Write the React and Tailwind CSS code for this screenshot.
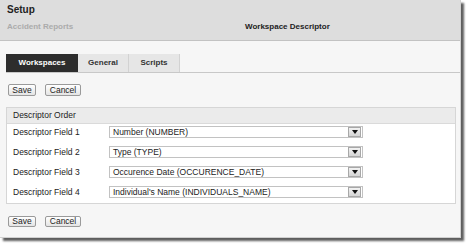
import React from "react";

function Arrow() {
  return (
    <div className="w-[13px] h-[10px] mr-[1px] border border-[#a8a8a8] bg-gradient-to-b from-[#f2f2f2] to-[#d4d4d4] flex items-center justify-center">
      <svg width="6" height="4" viewBox="0 0 6 4"><path d="M0 0H6L3 4Z" fill="#111" /></svg>
    </div>
  );
}

function Field({ label, value }) {
  return (
    <div className="flex items-center h-[12px]">
      <div className="w-[102px] pl-[6px] text-[8.5px] text-[#222] leading-none">{label}</div>
      <div className="flex items-center w-[254px] h-[12px] border border-[#c2c2c2] bg-white">
        <div className="flex-1 pl-[3px] text-[8.5px] text-[#222] leading-none">{value}</div>
        <Arrow />
      </div>
    </div>
  );
}

function Buttons({ h }) {
  const cls =
    "px-[4px] border border-[#9a9a9a] bg-gradient-to-b from-white to-[#e4e4e4] text-[8.5px] leading-none text-[#222] rounded-[2px] flex items-center justify-center";
  return (
    <div className="flex gap-[9px]">
      <button className={cls + " w-[28px] " + h}>Save</button>
      <button className={cls + " w-[36px] " + h}>Cancel</button>
    </div>
  );
}

export default function App() {
  return (
    <div className="w-[474px] h-[249px] bg-white" style={{ fontFamily: "Arial, 'Liberation Sans', sans-serif" }}>
      <div className="w-[461px] h-[238px] bg-[#f6f6f6] border-r border-b border-[#d0d0d0] shadow-[3px_3px_2px_#5e5e5e] flex flex-col">
        <div className="h-[41px] shrink-0 bg-[#dddddd] border-b border-[#c2c2c2] flex flex-col pl-[7px] pt-[4px]">
          <div className="text-[10px] font-bold text-[#222] leading-[12px]">Setup</div>
          <div className="flex items-center mt-[6px] leading-[10px]">
            <div className="w-[238px] text-[8px] font-bold text-[#ababab]">Accident Reports</div>
            <div className="text-[8px] font-bold text-[#222]">Workspace Descriptor</div>
          </div>
        </div>
        <div className="mt-[13px] ml-[6px] flex border-b border-[#c8c8c8] h-[19px] shrink-0">
          <div className="w-[72px] bg-[#2d2d2d] text-white text-[8px] font-bold flex items-center justify-center">Workspaces</div>
          <div className="w-[51px] bg-[#e6e6e6] border-r border-[#d2d2d2] text-[#333] text-[8px] font-bold flex items-center justify-center">General</div>
          <div className="w-[51px] bg-[#e6e6e6] border-r border-[#d2d2d2] text-[#333] text-[8px] font-bold flex items-center justify-center">Scripts</div>
        </div>
        <div className="ml-[8px] mt-[11px]"><Buttons h="h-[12px]" /></div>
        <div className="ml-[6px] mt-[11px] w-[450px] h-[97px] shrink-0 border border-[#d6d6d6] bg-white flex flex-col">
          <div className="h-[16px] shrink-0 bg-[#ebebeb] border-b border-[#dadada] flex items-center pl-[6px] text-[8.5px] text-[#222]">Descriptor Order</div>
          <div className="pt-[2px] flex flex-col gap-[8px]">
            <Field label="Descriptor Field 1" value="Number (NUMBER)" />
            <Field label="Descriptor Field 2" value="Type (TYPE)" />
            <Field label="Descriptor Field 3" value="Occurence Date (OCCURENCE_DATE)" />
            <Field label="Descriptor Field 4" value="Individual's Name (INDIVIDUALS_NAME)" />
          </div>
        </div>
        <div className="ml-[8px] mt-[12px]"><Buttons h="h-[11px]" /></div>
      </div>
    </div>
  );
}
